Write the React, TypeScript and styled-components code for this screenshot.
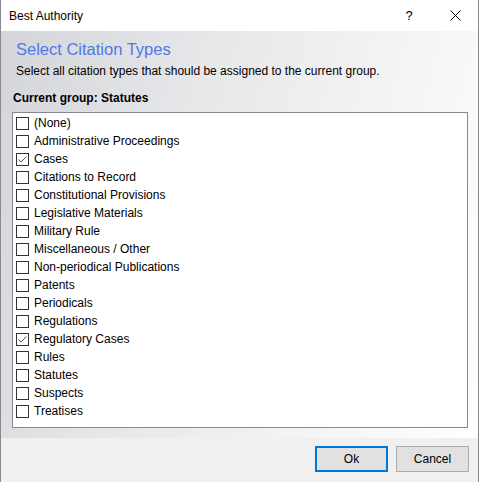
import React from "react";
import styled, { createGlobalStyle } from "styled-components";

const Global = createGlobalStyle`
  html, body { margin: 0; padding: 0; background: #ffffff; }
  body { font-family: "Liberation Sans", Arial, sans-serif; font-size: 12px; color: #000; }
  * { box-sizing: border-box; }
`;

const Window = styled.div`
  width: 479px;
  height: 482px;
  display: flex;
  flex-direction: column;
  border-left: 1px solid #8a8a8a;
  border-right: 1px solid #8a8a8a;
  background: #fff;
`;

const TitleBar = styled.div`
  height: 31px;
  display: flex;
  align-items: center;
  padding-left: 8px;
  background: #ffffff;
`;

const TitleText = styled.div`
  flex: 1;
  font-size: 12px;
  line-height: 16px;
`;

const CaptionButton = styled.div`
  width: 46px;
  height: 31px;
  display: flex;
  align-items: center;
  justify-content: center;
  font-size: 13px;
`;

const Body = styled.div`
  flex: 1;
  display: flex;
  flex-direction: column;
  padding: 7px 10px 0 11px;
  background: linear-gradient(105deg, #d4d5d9 0%, #e6e7e9 35%, #ffffff 100%);
`;

const Heading = styled.div`
  padding-left: 4px;
  font-size: 16.5px;
  line-height: 22px;
  color: #5078e6;
`;

const Subtitle = styled.div`
  padding-left: 4px;
  margin-top: 3px;
  font-size: 12px;
  line-height: 16px;
`;

const GroupLabel = styled.div`
  margin-top: 11px;
  padding-left: 1px;
  font-size: 12px;
  font-weight: bold;
  line-height: 16px;
`;

const List = styled.div`
  margin-top: 6px;
  height: 316px;
  border: 1px solid #828790;
  background: #ffffff;
  padding: 1px 0 0 3px;
  display: flex;
  flex-direction: column;
`;

const Row = styled.label`
  height: 18px;
  display: flex;
  align-items: center;
  gap: 5px;
  font-size: 12px;
  line-height: 18px;
`;

const Box = styled.span`
  width: 13px;
  height: 13px;
  border: 1px solid #333333;
  background: #ffffff;
  display: flex;
  align-items: center;
  justify-content: center;
`;

const Footer = styled.div`
  height: 44px;
  background: #f0f0f0;
  display: flex;
  justify-content: flex-end;
  align-items: flex-start;
  gap: 8px;
  padding: 8px 9px 0 0;
`;

const Button = styled.div<{ $primary?: boolean }>`
  width: 73px;
  height: 26px;
  display: flex;
  align-items: center;
  justify-content: center;
  background: #e1e1e1;
  border: ${(p) => (p.$primary ? "2px solid #0078d7" : "1px solid #adadad")};
  font-size: 12px;
`;

const items: [string, boolean][] = [
  ["(None)", false],
  ["Administrative Proceedings", false],
  ["Cases", true],
  ["Citations to Record", false],
  ["Constitutional Provisions", false],
  ["Legislative Materials", false],
  ["Military Rule", false],
  ["Miscellaneous / Other", false],
  ["Non-periodical Publications", false],
  ["Patents", false],
  ["Periodicals", false],
  ["Regulations", false],
  ["Regulatory Cases", true],
  ["Rules", false],
  ["Statutes", false],
  ["Suspects", false],
  ["Treatises", false],
];

const Check = () => (
  <svg width="11" height="11" viewBox="0 0 11 11">
    <path d="M1.5 5.5 L4 8 L9.5 2.5" fill="none" stroke="#555" strokeWidth="1" />
  </svg>
);

export default function App() {
  return (
    <Window>
      <Global />
      <TitleBar>
        <TitleText>Best Authority</TitleText>
        <CaptionButton>?</CaptionButton>
        <CaptionButton>
          <svg width="11" height="11" viewBox="0 0 11 11">
            <path d="M0.5 0.5 L10.5 10.5 M10.5 0.5 L0.5 10.5" stroke="#000" strokeWidth="1" />
          </svg>
        </CaptionButton>
      </TitleBar>
      <Body>
        <Heading>Select Citation Types</Heading>
        <Subtitle>Select all citation types that should be assigned to the current group.</Subtitle>
        <GroupLabel>Current group: Statutes</GroupLabel>
        <List>
          {items.map(([name, checked]) => (
            <Row key={name}>
              <Box>{checked && <Check />}</Box>
              {name}
            </Row>
          ))}
        </List>
      </Body>
      <Footer>
        <Button $primary>Ok</Button>
        <Button>Cancel</Button>
      </Footer>
    </Window>
  );
}
